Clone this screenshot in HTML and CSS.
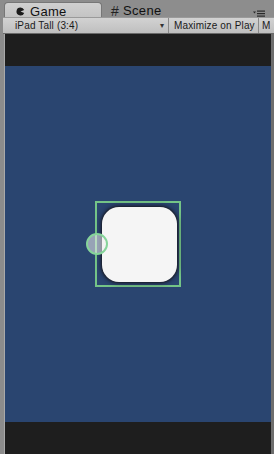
FILE: index.html
```html
<!DOCTYPE html>
<html>
<head>
<meta charset="utf-8">
<link rel="stylesheet" href="styles.css">
</head>
<body>
<div class="window">
  <div class="tabstrip">
    <div class="tab active">
      <svg class="tab-icon" width="9" height="9" viewBox="0 0 9 9"><path d="M4.5 0.5 A4 4 0 1 0 8.2 6 L4.5 4.5 L8.2 3 A4 4 0 0 0 4.5 0.5 Z" fill="#1c1c1c"/></svg>
      <span>Game</span>
    </div>
    <div class="tab">
      <span class="hash">#</span>
      <span>Scene</span>
    </div>
    <div class="menu-icon">
      <svg width="12" height="7" viewBox="0 0 12 7"><path d="M0 1.5 L3 1.5 L1.5 3.5 Z" fill="#2a2a2a"/><rect x="4" y="0.5" width="8" height="1.2" fill="#2a2a2a"/><rect x="4" y="3" width="8" height="1.2" fill="#2a2a2a"/><rect x="4" y="5.5" width="8" height="1.2" fill="#2a2a2a"/></svg>
    </div>
  </div>
  <div class="toolbar">
    <div class="tb-item dropdown"><span>iPad Tall (3:4)</span><span class="arrow">▾</span></div>
    <div class="tb-item toggle">Maximize on Play</div>
    <div class="tb-item cut">M</div>
  </div>
  <div class="view">
    <div class="letterbox"></div>
    <div class="screen">
      <div class="bounds"></div>
      <div class="sprite"></div>
      <div class="handle"></div>
    </div>
    <div class="letterbox"></div>
  </div>
</div>
</body>
</html>
```

FILE: styles.css
```css
* { box-sizing: border-box; }
html, body { margin: 0; padding: 0; }
body {
  width: 274px;
  height: 454px;
  overflow: hidden;
  background: #8c8c8c;
  font-family: "Liberation Sans", Arial, sans-serif;
}
.window {
  display: flex;
  flex-direction: column;
  height: 454px;
}
.tabstrip {
  height: 17px;
  display: flex;
  align-items: flex-end;
  padding-left: 4px;
  background: #8d8d8d;
  position: relative;
}
.tab {
  height: 15px;
  display: flex;
  align-items: center;
  padding-top: 2px;
  font-size: 13px;
  letter-spacing: 0.3px;
  color: #111;
  padding-left: 11px;
}
.tab.active {
  width: 98px;
  background: linear-gradient(#d0d0d0, #c4c4c4);
  border-radius: 4px 4px 0 0;
  border: 1px solid #777;
  border-bottom: none;
}
.tab-icon { margin-right: 5px; }
.tab:not(.active) { padding-left: 9px; }
.hash { font-size: 14px; margin-right: 4px; color: #222; }
.menu-icon {
  position: absolute;
  right: 9px;
  top: 10px;
  line-height: 0;
}
.toolbar {
  height: 17px;
  display: flex;
  background: linear-gradient(#d2d2d2, #bfbfbf);
  border-top: 1px solid #9a9a9a;
  border-bottom: 1px solid #6a6a6a;
  margin-left: 3px;
  font-size: 10px;
  letter-spacing: 0.15px;
  color: #1a1a1a;
}
.tb-item {
  display: flex;
  align-items: center;
  border-right: 1px solid #8a8a8a;
  white-space: nowrap;
}
.dropdown {
  width: 166px;
  padding-left: 12px;
  justify-content: space-between;
  padding-right: 4px;
}
.arrow { font-size: 8px; color: #333; }
.toggle { width: 90px; padding-left: 5px; }
.cut { padding-left: 3px; border-right: none; overflow: hidden; }
.view {
  flex: 1;
  display: flex;
  flex-direction: column;
  margin-left: 4px;
  border-left: 1px solid #a9a9a9;
  border-right: 3px solid #6e6e6e;
  background: #1f1f1f;
}
.letterbox {
  height: 32px;
  background: #1e1e1e;
}
.screen {
  flex: 1;
  background: #2a4570;
  position: relative;
}
.bounds {
  position: absolute;
  left: 90px;
  top: 135px;
  width: 86px;
  height: 86px;
  border: 2px solid #74c487;
}
.sprite {
  position: absolute;
  left: 97px;
  top: 141px;
  width: 75px;
  height: 75px;
  background: #f5f5f5;
  border-radius: 17px;
  box-shadow: 0 0 2px 1px rgba(25, 25, 30, 0.7), 0 0 4px 2px rgba(20, 20, 30, 0.45);
}
.handle {
  position: absolute;
  left: 81px;
  top: 167px;
  width: 22px;
  height: 22px;
  border-radius: 50%;
  border: 2px solid #86d49a;
  background: rgba(240, 240, 240, 0.55);
}
```
